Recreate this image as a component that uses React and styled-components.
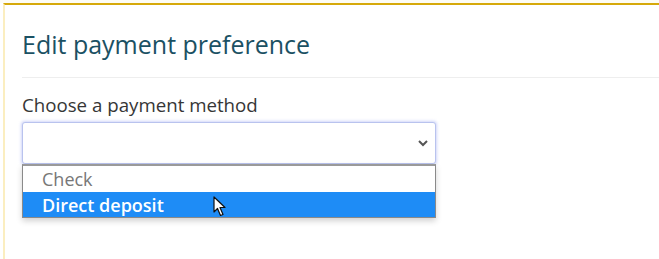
import styled, { createGlobalStyle } from "styled-components";

const GlobalStyle = createGlobalStyle`
  html, body {
    margin: 0;
    padding: 0;
    background: #ffffff;
  }
  body {
    width: 659px;
    height: 259px;
    overflow: hidden;
    font-family: 'Open Sans', 'Noto Sans', sans-serif;
  }
`

const Frame = styled.div`
  width: 659px;
  height: 259px;
  box-sizing: border-box;
  padding-top: 3px;
  background: linear-gradient(#fdfcf4 0, #fdfcf4 3px, #ffffff 3px);
`

const Card = styled.div`
  height: 100%;
  box-sizing: border-box;
  border-top: 2px solid #d6a90a;
  border-left: 2px solid #fbeec0;
  margin-left: 3px;
  padding: 22px 0 0 17px;
  background: #ffffff;
`

const Title = styled.h1`
  margin: 0;
  font-size: 25px;
  font-weight: 500;
  line-height: 34px;
  color: #1b5163;
`

const Divider = styled.hr`
  margin: 16px 0 0 0;
  border: none;
  border-top: 1px solid #eeeeee;
`

const Label = styled.label`
  display: block;
  margin-top: 16px;
  font-size: 18.7px;
  font-weight: 500;
  line-height: 22px;
  color: #363636;
`

const Field = styled.div`
  position: relative;
  width: 414px;
  margin-top: 6px;
`

const SelectBox = styled.div`
  height: 42px;
  box-sizing: border-box;
  border: 1px solid #b9c3ee;
  border-radius: 3px;
  box-shadow: 0 0 3px 1px rgba(150, 165, 240, 0.45);
  background: #ffffff;
  display: flex;
  align-items: center;
  justify-content: flex-end;
  padding-right: 6px;
  color: #555;
`

const Options = styled.ul`
  position: absolute;
  left: 0;
  top: 42px;
  width: 414px;
  box-sizing: border-box;
  margin: 0;
  padding: 0;
  list-style: none;
  border: 1px solid #8a8a8a;
  border-top: 2px solid #9a9a9a;
  background: #ffffff;
  box-shadow: 0 3px 6px rgba(0, 0, 0, 0.18);
`

const Option = styled.li`
  height: ${p => (p.$selected ? "25px" : "26px")};
  display: flex;
  align-items: center;
  padding-left: 19px;
  font-size: 18px;
  color: ${p => (p.$selected ? "#ffffff" : "#777777")};
  background: ${p => (p.$selected ? "#1e8cf6" : "#ffffff")};
  font-weight: ${p => (p.$selected ? 600 : 500)};
`

const Pointer = styled.svg`
  position: absolute;
  left: 191px;
  top: 74px;
`

export default function App() {
    return (
        <Frame>
            <GlobalStyle />
            <Card>
                <Title>Edit payment preference</Title>
                <Divider />
                <Label>Choose a payment method</Label>
                <Field>
                    <SelectBox>
                        <svg width="12" height="8" viewBox="0 0 12 8">
                            <path d="M2 2 L6 6 L10 2" fill="none" stroke="#555" strokeWidth="2" />
                        </svg>
                    </SelectBox>
                    <Options>
                        <Option>Check</Option>
                        <Option $selected>Direct deposit</Option>
                    </Options>
                    <Pointer width="14" height="21" viewBox="0 0 14 21">
                        <path
                            d="M1 1 L1 16 L4.5 12.5 L7.5 19.5 L10 18.5 L7 11.5 L12 11.5 Z"
                            fill="#ffffff"
                            stroke="#111"
                            strokeWidth="1.2"
                            strokeLinejoin="round"
                        />
                    </Pointer>
                </Field>
            </Card>
        </Frame>
    )
}
